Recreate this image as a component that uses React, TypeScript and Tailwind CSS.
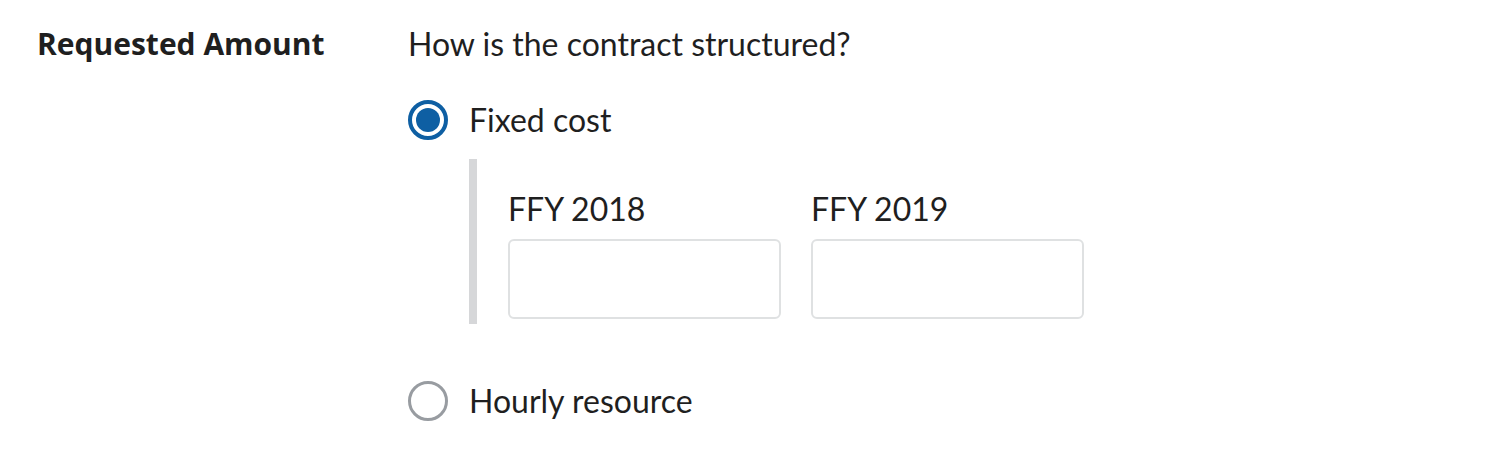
export default function App() {
  return (
    <div className="flex bg-white pl-[37px] pt-[20px] text-[#1f1f1f]" style={{ minHeight: 460 }}>
      <div className="w-[371px] shrink-0">
        <h2 className="font-['Open_Sans',sans-serif] text-[30px] font-bold leading-[48px]">Requested Amount</h2>
      </div>
      <div className="flex flex-col font-['Lato',sans-serif] text-[32px]">
        <p className="leading-[48px]">How is the contract structured?</p>

        <label className="mt-[32px] flex items-center gap-[21px]">
          <span className="flex h-[40px] w-[40px] items-center justify-center rounded-full border-[4px] border-[#0e5fa3]">
            <span className="h-[24px] w-[24px] rounded-full bg-[#0e5fa3]" />
          </span>
          <span className="leading-[40px]">Fixed cost</span>
        </label>

        <div className="ml-[61px] mt-[19px] flex gap-[30px] border-l-[8px] border-[#d6d7d9] pb-[5px] pl-[31px] pt-[30px]">
          <div className="flex flex-col">
            <span className="leading-[40px]">FFY 2018</span>
            <input className="mt-[10px] h-[80px] w-[273px] rounded-[6px] border-2 border-[#dfe1e2] bg-white outline-none" />
          </div>
          <div className="flex flex-col">
            <span className="leading-[40px]">FFY 2019</span>
            <input className="mt-[10px] h-[80px] w-[273px] rounded-[6px] border-2 border-[#dfe1e2] bg-white outline-none" />
          </div>
        </div>

        <label className="mt-[57px] flex items-center gap-[21px]">
          <span className="h-[40px] w-[40px] rounded-full border-[3px] border-[#989ca1]" />
          <span className="leading-[40px]">Hourly resource</span>
        </label>
      </div>
    </div>
  );
}
